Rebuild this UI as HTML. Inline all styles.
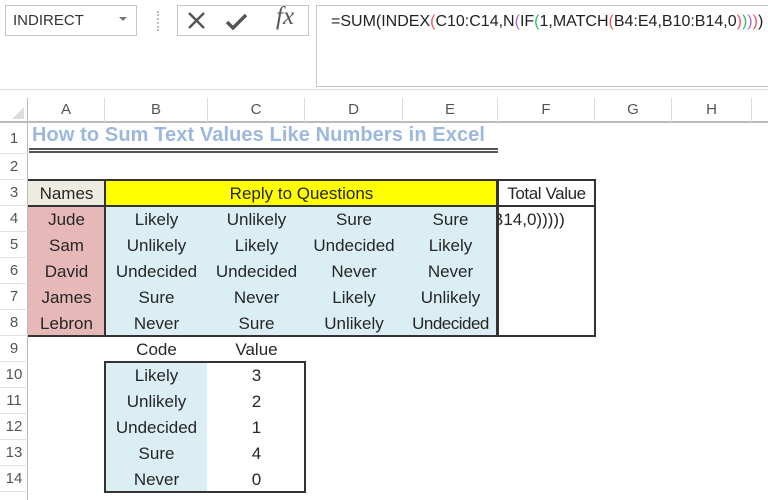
<!DOCTYPE html>
<html><head><meta charset="utf-8"><style>
*{margin:0;padding:0;box-sizing:border-box}
body{width:768px;height:500px;background:#fff;position:relative;overflow:hidden;font-family:"Liberation Sans",sans-serif;color:#222}
.a{position:absolute}
.c{position:absolute;text-align:center;font-size:17px;line-height:27px;height:26px;color:#262626;letter-spacing:0;white-space:nowrap}
.rh{position:absolute;left:0;width:28px;text-align:center;font-size:15px;color:#555;border-bottom:1px solid #e3e3e3}
.ch{position:absolute;top:98px;height:24px;line-height:24px;text-align:center;font-size:15px;color:#555;border-right:1px solid #dcdcdc}
</style></head><body>
<div class="a" style="left:5px;top:5px;width:132px;height:31px;border:1px solid #c6c6c6;font-size:15px;line-height:29px;padding-left:7px;color:#333">INDIRECT</div>
<div class="a" style="left:119px;top:17px;width:0;height:0;border-left:4px solid transparent;border-right:4px solid transparent;border-top:4px solid #777"></div>
<div class="a" style="left:157px;top:11px;width:2px;height:20px;border-left:2px dotted #bbb"></div>
<div class="a" style="left:177px;top:5px;width:132px;height:31px;border:1px solid #c6c6c6"></div>
<svg class="a" style="left:185px;top:9px" width="120" height="24">
<path d="M4 4 L19 19 M19 4 L4 19" stroke="#555" stroke-width="2.4" fill="none"/>
<path d="M42 13 L48 19 L61 6" stroke="#555" stroke-width="3.4" fill="none"/>
</svg>
<div class="a" style="left:276px;top:3px;font-family:'Liberation Serif',serif;font-style:italic;font-size:25px;color:#555">fx</div>
<div class="a" style="left:316px;top:5px;width:460px;height:82px;border:1px solid #c6c6c6;font-size:16px;padding:7px 0 0 14px;color:#222;white-space:nowrap;letter-spacing:0">=SUM(INDEX<span style="color:#e56">(</span>C10:C14,N<span style="color:#a6c">(</span>IF<span style="color:#3b6">(</span>1,MATCH<span style="color:#e56">(</span>B4:E4,B10:B14,0<span style="color:#e56">)</span><span style="color:#3b6">)</span><span style="color:#a6c">)</span><span style="color:#e56">)</span>)</div>
<div class="a" style="left:0;top:89px;width:768px;height:1px;background:#ddd"></div>
<div class="a" style="left:0;top:121px;width:768px;height:2px;background:#bbb"></div>
<div class="a" style="left:27px;top:98px;width:1px;height:402px;background:#bbb"></div>
<svg class="a" style="left:10px;top:106px" width="16" height="14"><path d="M14 1 L14 13 L2 13 Z" fill="#ddd"/></svg>
<div class="ch" style="left:28px;width:77px">A</div>
<div class="ch" style="left:105px;width:103px">B</div>
<div class="ch" style="left:208px;width:97px">C</div>
<div class="ch" style="left:305px;width:98px">D</div>
<div class="ch" style="left:403px;width:95px">E</div>
<div class="ch" style="left:498px;width:97px">F</div>
<div class="ch" style="left:595px;width:77px">G</div>
<div class="ch" style="left:672px;width:80px">H</div>
<div class="rh" style="top:123px;height:31px;line-height:31px">1</div>
<div class="rh" style="top:154px;height:26px;line-height:26px">2</div>
<div class="rh" style="top:180px;height:26px;line-height:26px">3</div>
<div class="rh" style="top:206px;height:26px;line-height:26px">4</div>
<div class="rh" style="top:232px;height:26px;line-height:26px">5</div>
<div class="rh" style="top:258px;height:26px;line-height:26px">6</div>
<div class="rh" style="top:284px;height:26px;line-height:26px">7</div>
<div class="rh" style="top:310px;height:26px;line-height:26px">8</div>
<div class="rh" style="top:336px;height:26px;line-height:26px">9</div>
<div class="rh" style="top:362px;height:26px;line-height:26px">10</div>
<div class="rh" style="top:388px;height:26px;line-height:26px">11</div>
<div class="rh" style="top:414px;height:26px;line-height:26px">12</div>
<div class="rh" style="top:440px;height:26px;line-height:26px">13</div>
<div class="rh" style="top:466px;height:26px;line-height:26px">14</div>
<div class="a" style="left:32px;top:124px;font-size:20px;font-weight:bold;color:#9db8de;white-space:nowrap;letter-spacing:0.1px">How to Sum Text Values Like Numbers in Excel</div>
<div class="a" style="left:29px;top:148px;width:469px;height:5px;border-top:2px solid #555;border-bottom:2px solid #555"></div>
<div class="a" style="left:28px;top:180px;width:77px;height:26px;background:#eeece1"></div>
<div class="a" style="left:105px;top:180px;width:393px;height:26px;background:#ffff00"></div>
<div class="a" style="left:28px;top:206px;width:77px;height:130px;background:#e6b8b8"></div>
<div class="a" style="left:105px;top:206px;width:393px;height:130px;background:#daeef3"></div>
<div class="a" style="left:28px;top:179px;width:470px;height:158px;border:2px solid #333;border-left:none"></div>
<div class="a" style="left:104px;top:179px;width:2px;height:158px;background:#333"></div>
<div class="a" style="left:28px;top:205px;width:567px;height:2px;background:#333"></div>
<div class="a" style="left:497px;top:179px;width:99px;height:158px;border:2px solid #333"></div>
<div class="c" style="left:28px;top:180px;width:77px">Names</div>
<div class="c" style="left:105px;top:180px;width:393px">Reply to Questions</div>
<div class="c" style="left:498px;top:180px;width:97px;letter-spacing:-0.4px">Total Value</div>
<div class="a" style="left:499px;top:206px;width:95px;height:26px;overflow:hidden;font-size:17px;line-height:27px;color:#262626;white-space:nowrap"><span style="margin-left:-7px">B14,0)))))</span></div>
<div class="c" style="left:28px;top:206px;width:77px">Jude</div>
<div class="c" style="left:28px;top:232px;width:77px">Sam</div>
<div class="c" style="left:28px;top:258px;width:77px">David</div>
<div class="c" style="left:28px;top:284px;width:77px">James</div>
<div class="c" style="left:28px;top:310px;width:77px">Lebron</div>
<div class="c" style="left:105px;top:206px;width:103px">Likely</div>
<div class="c" style="left:105px;top:232px;width:103px">Unlikely</div>
<div class="c" style="left:105px;top:258px;width:103px">Undecided</div>
<div class="c" style="left:105px;top:284px;width:103px">Sure</div>
<div class="c" style="left:105px;top:310px;width:103px">Never</div>
<div class="c" style="left:208px;top:206px;width:97px">Unlikely</div>
<div class="c" style="left:208px;top:232px;width:97px">Likely</div>
<div class="c" style="left:208px;top:258px;width:97px">Undecided</div>
<div class="c" style="left:208px;top:284px;width:97px">Never</div>
<div class="c" style="left:208px;top:310px;width:97px">Sure</div>
<div class="c" style="left:305px;top:206px;width:98px">Sure</div>
<div class="c" style="left:305px;top:232px;width:98px">Undecided</div>
<div class="c" style="left:305px;top:258px;width:98px">Never</div>
<div class="c" style="left:305px;top:284px;width:98px">Likely</div>
<div class="c" style="left:305px;top:310px;width:98px">Unlikely</div>
<div class="c" style="left:403px;top:206px;width:95px">Sure</div>
<div class="c" style="left:403px;top:232px;width:95px">Likely</div>
<div class="c" style="left:403px;top:258px;width:95px">Never</div>
<div class="c" style="left:403px;top:284px;width:95px">Unlikely</div>
<div class="c" style="left:403px;top:310px;width:95px;letter-spacing:-0.5px">Undecided</div>
<div class="c" style="left:105px;top:336px;width:103px">Code</div>
<div class="c" style="left:208px;top:336px;width:97px">Value</div>
<div class="a" style="left:105px;top:362px;width:102px;height:130px;background:#daeef3"></div>
<div class="a" style="left:104px;top:361px;width:202px;height:132px;border:2px solid #333"></div>
<div class="c" style="left:105px;top:362px;width:103px">Likely</div>
<div class="c" style="left:105px;top:388px;width:103px">Unlikely</div>
<div class="c" style="left:105px;top:414px;width:103px">Undecided</div>
<div class="c" style="left:105px;top:440px;width:103px">Sure</div>
<div class="c" style="left:105px;top:466px;width:103px">Never</div>
<div class="c" style="left:208px;top:362px;width:97px">3</div>
<div class="c" style="left:208px;top:388px;width:97px">2</div>
<div class="c" style="left:208px;top:414px;width:97px">1</div>
<div class="c" style="left:208px;top:440px;width:97px">4</div>
<div class="c" style="left:208px;top:466px;width:97px">0</div>
</body></html>
